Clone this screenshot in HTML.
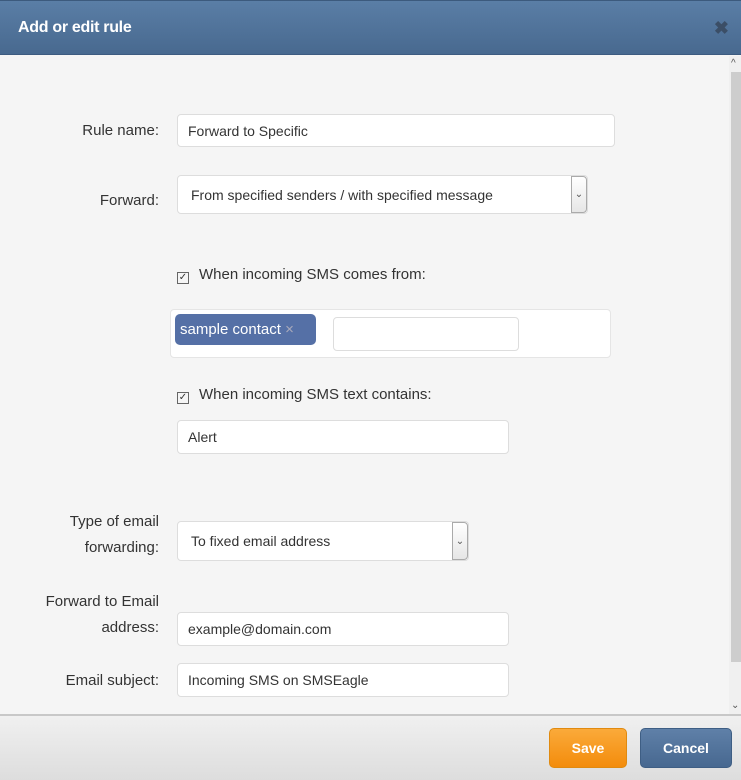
<!DOCTYPE html>
<html><head><style>
*{box-sizing:border-box}
body{margin:0;width:741px;height:780px;overflow:hidden;font-family:"Liberation Sans",sans-serif;background:#f5f5f5;position:relative}
.hdr{position:absolute;left:0;top:0;width:741px;height:55px;background:linear-gradient(#5a7ea6,#48698f);border-top:1px solid #3c5a7d;border-bottom:1px solid #3d5b80}
.hdr h1{margin:0;position:absolute;left:18px;top:18px;font-size:16px;color:#fff;font-weight:bold;letter-spacing:-0.3px}
.x{position:absolute;right:12px;top:17px;color:#3b4e66;font-size:18px;font-weight:bold}
.sb{position:absolute;left:729px;top:56px;width:12px;height:658px;background:#f0f0f0}
.thumb{position:absolute;left:731px;top:72px;width:10px;height:590px;background:#cdcdcd}
.lbl{position:absolute;font-size:15px;color:#333;text-align:right;right:582px;line-height:27px}
.in{position:absolute;background:#fff;border:1px solid #ddd;border-radius:4px;font-size:14px;color:#333;padding-left:10px;display:flex;align-items:center}
.sel{padding-left:13px}
.arr{position:absolute;right:0;top:0;bottom:0;width:16px;background:linear-gradient(#fff,#e6e6e6);font-size:10px;color:#555;display:flex;align-items:center;justify-content:center;border-radius:0 4px 4px 0;border:1px solid #aaa}
.cb{position:absolute;font-size:15px;color:#333}
.cb span{display:inline-block;width:12px;height:12px;border:1px solid #666;margin-right:10px;vertical-align:-1px;font-size:10px;line-height:10px;text-align:center}
.ftr{position:absolute;left:0;top:714px;width:741px;height:66px;background:linear-gradient(#f0f0f0,#ddd);border-top:2px solid #c8c8c8}
.btn{position:absolute;top:728px;height:40px;border-radius:5px;color:#fff;font-weight:bold;font-size:14px;display:flex;align-items:center;justify-content:center}
</style></head><body>
<div class="hdr"><h1>Add or edit rule</h1><div class="x">✖</div></div>
<div class="sb"></div><div class="thumb"></div>
<div style="position:absolute;left:731px;top:58px;font-size:10px;color:#555">^</div>
<div class="lbl" style="top:117px">Rule name:</div>
<div class="in" style="left:177px;top:114px;width:438px;height:33px">Forward to Specific</div>
<div class="lbl" style="top:187px">Forward:</div>
<div class="in sel" style="left:177px;top:175px;width:411px;height:39px">From specified senders / with specified message<div class="arr">⌄</div></div>
<div class="cb" style="left:177px;top:266px"><span>✓</span>When incoming SMS comes from:</div>
<div class="in" style="left:170px;top:309px;width:441px;height:49px;border-color:#e5e5e5"></div>
<div style="position:absolute;left:175px;top:314px;width:141px;height:31px;background:#5570a6;border-radius:5px;color:#fff;font-size:15px;line-height:31px;padding-left:5px">sample contact <span style="color:#aab">×</span></div>
<div class="in" style="left:333px;top:317px;width:186px;height:34px"></div>
<div class="cb" style="left:177px;top:386px"><span>✓</span>When incoming SMS text contains:</div>
<div class="in" style="left:177px;top:420px;width:332px;height:34px">Alert</div>
<div class="lbl" style="top:509px;line-height:26px">Type of email<br>forwarding:</div>
<div class="in sel" style="left:177px;top:521px;width:292px;height:40px">To fixed email address<div class="arr">⌄</div></div>
<div class="lbl" style="top:589px;line-height:26px">Forward to Email<br>address:</div>
<div class="in" style="left:177px;top:612px;width:332px;height:34px">example@domain.com</div>
<div class="lbl" style="top:667px">Email subject:</div>
<div class="in" style="left:177px;top:663px;width:332px;height:34px">Incoming SMS on SMSEagle</div>
<div class="ftr"></div>
<div style="position:absolute;left:731px;top:700px;font-size:10px;color:#555">⌄</div>
<div class="btn" style="left:549px;width:78px;background:linear-gradient(#fbaa3a,#f38c0c);border:1px solid #e08a10">Save</div>
<div class="btn" style="left:640px;width:92px;background:linear-gradient(#5f80a8,#476890);border:1px solid #3e5e84">Cancel</div>
</body></html>
